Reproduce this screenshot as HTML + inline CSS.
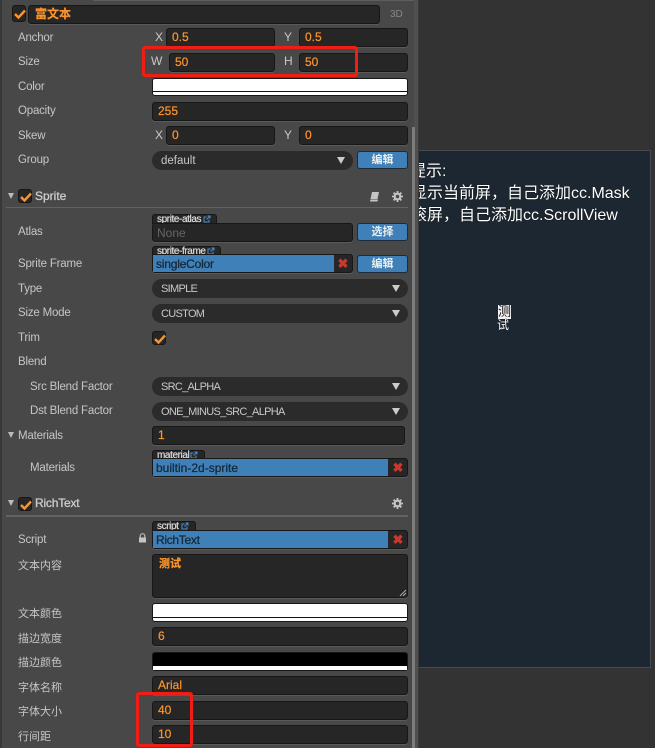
<!DOCTYPE html>
<html><head><meta charset="utf-8"><style>
html,body{margin:0;padding:0;overflow:hidden;width:655px;height:748px}
body{background:#333;position:relative;font:12px "Liberation Sans","Noto Sans CJK SC",sans-serif;color:#ccc}
div,span,svg{position:absolute;box-sizing:border-box}
.l{left:18px;margin-top:1px;height:16px;line-height:16px;white-space:nowrap;color:#c6c6c6;font-size:11.5px;letter-spacing:-.2px}
.k{font-size:11px;letter-spacing:0}
.l2{left:30px}
.f{background:#262626;border:1px solid #171717;border-radius:3px;box-shadow:0 1px 0 #5a5a5a;height:19px;color:#fd942b;-webkit-text-stroke:.2px #fd942b;line-height:17px;padding-left:5px;white-space:nowrap}
.p{left:152px;width:256px;height:19px;background:#2b2b2b;border-radius:10px;color:#c8c8c8;line-height:21px;padding-left:9px;white-space:nowrap;font-size:11px;letter-spacing:-.7px}
.p:after{content:"";position:absolute;right:8px;top:6px;border-left:4px solid transparent;border-right:4px solid transparent;border-top:7px solid #ccc}
.b{left:357px;width:51px;height:18px;background:#3f80b8;border:1px solid #1c2c3a;border-radius:3px;color:#eee;font-weight:bold;font-size:11px;line-height:16px;text-align:center}
.a{color:#c8c8c8;left:155px;height:16px;line-height:16px}
.c{background:#262626;border:1px solid #171717;border-radius:3px;width:14px;height:14px}
.c svg{left:1px;top:1px}
.t{left:152px;height:10px;background:#262626;border:1px solid #171717;border-bottom:0;border-radius:3px 3px 0 0;color:#ddd;font-size:10px;letter-spacing:-.4px;-webkit-text-stroke:.2px #ddd;line-height:9px;padding-left:4px;white-space:nowrap}
.t svg{top:0}
.u{background:#3f80b8;color:#172a3a;-webkit-text-stroke:.3px #172a3a;left:153px;height:17px;line-height:19px;padding-left:3px;white-space:nowrap}
.x{color:#c8392f;font-weight:bold;font-size:13px;line-height:17px;text-align:center;width:20px;height:17px}
.tri{left:8px;width:0;height:0;border-left:3.5px solid transparent;border-right:3.5px solid transparent;border-top:6px solid #bbb}
.sw{left:152px;width:256px;height:18px;border:1px solid #171717;border-radius:3px;background:#fff}
.h{left:35px;color:#ccc;height:16px;line-height:16px;-webkit-text-stroke:.3px #ccc}
.ln{left:6px;width:402px;height:1px;background:#626262}
.rd{border:3px solid #f01d14;border-radius:3px}
.ct{white-space:nowrap;color:#fff;font-size:16px;line-height:20px;text-shadow:0 0 1px #000}
</style></head><body>
<div style="left:0;top:0;width:418px;height:748px;background:#484848"></div>
<div style="left:0;top:0;width:2px;height:748px;background:#383838"></div>
<div style="left:93px;top:0;width:326px;height:1px;background:#5e5e5e"></div>
<div style="left:414px;top:0;width:4px;height:748px;background:#505050"></div>
<div style="left:412px;top:127px;width:3px;height:621px;background:#7c7c7c"></div>
<div style="left:418px;top:0;width:1px;height:748px;background:#3a3a3a"></div>

<div style="left:419px;top:150px;width:232px;height:518px;background:#1d2731;border:1px solid #454b50;border-left:0"></div>
<div style="left:419px;top:151px;width:231px;height:516px;overflow:hidden">
<div class="ct" style="left:-9px;top:11px">提示:</div>
<div class="ct" style="left:-8px;top:33px">显示当前屏，自己添加cc.Mask</div>
<div class="ct" style="left:-8px;top:55px">滚屏，自己添加cc.ScrollView</div>
</div>
<div style="left:498px;top:305px;width:13px;height:14px;background:#f2f2f2;color:#111;font-size:13px;line-height:14px;overflow:hidden">测</div>
<div style="left:497px;top:318px;color:#fff;font-size:12px;line-height:14px;text-shadow:0 0 1px #000">试</div>

<div class="c" style="left:12px;top:5px;height:17px"><svg width="12" height="14" viewBox="0 0 12 14"><path d="M1 7l3.500 3.500L11 3.500" fill="none" stroke="#fd942b" stroke-width="2.400"/></svg></div>
<div class="f" style="left:28px;top:5px;width:352px;font-weight:bold;padding-left:6px;">富文本</div>
<div style="left:390px;top:9px;color:#888;font-size:10px;line-height:12px">3D</div>

<div class="l" style="top:29px">Anchor</div>
<div class="a" style="top:29px">X</div><div class="f" style="left:166px;top:28px;width:109px">0.5</div>
<div class="a" style="left:284px;top:29px">Y</div><div class="f" style="left:299px;top:28px;width:109px">0.5</div>

<div class="l" style="top:53px">Size</div>
<div class="a" style="left:151px;top:53px">W</div><div class="f" style="left:169px;top:53px;width:106px">50</div>
<div class="a" style="left:284px;top:53px">H</div><div class="f" style="left:299px;top:53px;width:109px">50</div>

<div class="l" style="top:78px">Color</div>
<div class="sw" style="top:78px"></div><div style="left:153px;top:91px;width:254px;height:1px;background:#111"></div>

<div class="l" style="top:102px">Opacity</div>
<div class="f" style="left:152px;top:102px;width:256px">255</div>

<div class="l" style="top:127px">Skew</div>
<div class="a" style="top:127px">X</div><div class="f" style="left:166px;top:126px;width:109px">0</div>
<div class="a" style="left:284px;top:127px">Y</div><div class="f" style="left:299px;top:126px;width:109px">0</div>

<div class="l" style="top:151px">Group</div>
<div class="p" style="top:151px;width:201px;font-size:11.500px;letter-spacing:0">default</div>
<div class="b" style="top:151px">编辑</div>

<div class="tri" style="top:193px"></div>
<div class="c" style="left:18px;top:189px"><svg width="12" height="12" viewBox="0 0 12 12"><path d="M1 6l3.500 3.500L11 2.500" fill="none" stroke="#fd942b" stroke-width="2.400"/></svg></div>
<div class="h" style="top:188px">Sprite</div>
<svg style="left:369px;top:191px" width="11" height="11" viewBox="0 0 11 11"><path d="M3 1h7l-1.500 7H1.500zM1.500 8.500l-.5 2h7.500l.5-2z" fill="#c4c4c4"/></svg>
<svg style="left:392px;top:191px" width="11" height="11" viewBox="0 0 11 11"><circle cx="5.500" cy="5.500" r="2.800" fill="none" stroke="#c4c4c4" stroke-width="2.200"/><path d="M5.500 0v2M5.500 9v2M0 5.500h2M9 5.500h2M1.600 1.600L3 3M8 8l1.400 1.400M9.400 1.600L8 3M3 8L1.600 9.400" stroke="#c4c4c4" stroke-width="1.800"/></svg>
<div class="ln" style="top:207px"></div>

<div class="l" style="top:223px">Atlas</div>
<div class="t" style="top:214px;width:65px">sprite-atlas<svg style="left:50px" width="8" height="8" viewBox="0 0 8 8"><path d="M6 4.500V7H1V2h2.500M4.500 1H7v2.500M7 1L3.500 4.500" fill="none" stroke="#4a90d0" stroke-width="1"/></svg></div>
<div class="f" style="left:152px;top:223px;width:201px;color:#666;-webkit-text-stroke:0;padding-left:4px;line-height:18px">None</div>
<div class="b" style="top:223px">选择</div>

<div class="l" style="top:255px">Sprite Frame</div>
<div class="t" style="top:246px;width:69px">sprite-frame<svg style="left:54px" width="8" height="8" viewBox="0 0 8 8"><path d="M6 4.500V7H1V2h2.500M4.500 1H7v2.500M7 1L3.500 4.500" fill="none" stroke="#4a90d0" stroke-width="1"/></svg></div>
<div class="f" style="left:152px;top:254px;width:201px"></div>
<div class="u" style="top:255px;width:181px;letter-spacing:-.2px">singleColor</div>
<div class="x" style="left:333px;top:255px">✖</div>
<div class="b" style="top:255px">编辑</div>

<div class="l" style="top:280px">Type</div>
<div class="p" style="top:279px">SIMPLE</div>
<div class="l" style="top:304px">Size Mode</div>
<div class="p" style="top:304px">CUSTOM</div>

<div class="l" style="top:329px">Trim</div>
<div class="c" style="left:152px;top:331px"><svg width="12" height="12" viewBox="0 0 12 12"><path d="M1 6l3.500 3.500L11 2.500" fill="none" stroke="#fd942b" stroke-width="2.400"/></svg></div>
<div class="l" style="top:353px">Blend</div>
<div class="l l2" style="top:378px">Src Blend Factor</div>
<div class="p" style="top:377px">SRC_ALPHA</div>
<div class="l l2" style="top:402px">Dst Blend Factor</div>
<div class="p" style="top:402px">ONE_MINUS_SRC_ALPHA</div>

<div class="tri" style="top:432px"></div>
<div class="l" style="top:427px">Materials</div>
<div class="f" style="left:152px;top:426px;width:253px">1</div>
<div class="l l2" style="top:459px">Materials</div>
<div class="t" style="top:450px;width:53px">material<svg style="left:37px" width="8" height="8" viewBox="0 0 8 8"><path d="M6 4.500V7H1V2h2.500M4.500 1H7v2.500M7 1L3.500 4.500" fill="none" stroke="#4a90d0" stroke-width="1"/></svg></div>
<div class="f" style="left:152px;top:458px;width:256px"></div>
<div class="u" style="top:459px;width:235px">builtin-2d-sprite</div>
<div class="x" style="left:388px;top:459px">✖</div>

<div class="tri" style="top:500px"></div>
<div class="c" style="left:18px;top:497px"><svg width="12" height="12" viewBox="0 0 12 12"><path d="M1 6l3.500 3.500L11 2.500" fill="none" stroke="#fd942b" stroke-width="2.400"/></svg></div>
<div class="h" style="top:495px;letter-spacing:-.2px">RichText</div>
<svg style="left:392px;top:498px" width="11" height="11" viewBox="0 0 11 11"><circle cx="5.500" cy="5.500" r="2.800" fill="none" stroke="#c4c4c4" stroke-width="2.200"/><path d="M5.500 0v2M5.500 9v2M0 5.500h2M9 5.500h2M1.600 1.600L3 3M8 8l1.400 1.400M9.400 1.600L8 3M3 8L1.600 9.400" stroke="#c4c4c4" stroke-width="1.800"/></svg>
<div class="ln" style="top:515px;height:2px"></div>

<div class="l" style="top:531px">Script</div>
<svg style="left:138px;top:533px" width="9" height="10" viewBox="0 0 9 10"><path d="M2.200 5V3a2.300 2.300 0 0 1 4.600 0v2" fill="none" stroke="#bbb" stroke-width="1.200"/><rect x="1" y="4.500" width="7" height="5" fill="#c4c4c4"/></svg>
<div class="t" style="top:521px;width:44px">script<svg style="left:28px" width="8" height="8" viewBox="0 0 8 8"><path d="M6 4.500V7H1V2h2.500M4.500 1H7v2.500M7 1L3.500 4.500" fill="none" stroke="#4a90d0" stroke-width="1"/></svg></div>
<div class="f" style="left:152px;top:530px;width:256px"></div>
<div class="u" style="top:531px;width:235px;letter-spacing:-.3px">RichText</div>
<div class="x" style="left:388px;top:531px">✖</div>

<div class="l k" style="top:557px">文本内容</div>
<div class="f" style="left:152px;top:554px;width:256px;height:44px;font-weight:bold;padding-left:6px;line-height:18px;font-size:11px">测试</div>
<svg style="left:399px;top:589px" width="8" height="8" viewBox="0 0 8 8"><path d="M1 7L7 1M4 7L7 4" stroke="#aaa" stroke-width="1"/></svg>

<div class="l k" style="top:605px">文本颜色</div>
<div class="sw" style="top:603px;height:19px"></div><div style="left:153px;top:617px;width:254px;height:1px;background:#111"></div>

<div class="l k" style="top:630px">描边宽度</div>
<div class="f" style="left:152px;top:627px;width:256px">6</div>

<div class="l k" style="top:654px">描边颜色</div>
<div style="left:152px;top:652px;width:256px;height:19px;background:#000;border:1px solid #171717;border-radius:3px"></div><div style="left:153px;top:666px;width:254px;height:4px;background:#fff"></div>

<div class="l k" style="top:679px">字体名称</div>
<div class="f" style="left:152px;top:676px;width:256px">Arial</div>

<div class="l k" style="top:703px">字体大小</div>
<div class="f" style="left:152px;top:701px;width:256px">40</div>

<div class="l k" style="top:728px">行间距</div>
<div class="f" style="left:152px;top:725px;width:256px">10</div>

<div class="rd" style="left:142px;top:46px;width:216px;height:31px"></div>
<div class="rd" style="left:136px;top:692px;width:57px;height:55px"></div>
</body></html>
